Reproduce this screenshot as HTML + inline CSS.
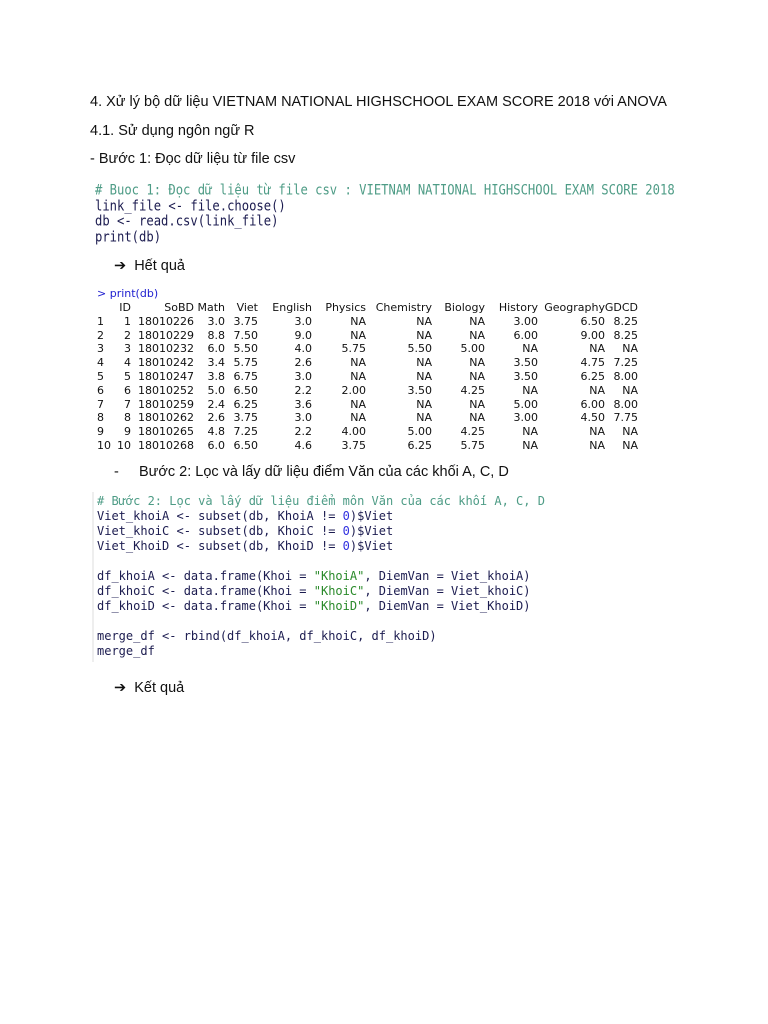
<!DOCTYPE html>
<html><head><meta charset="utf-8"><style>
body{margin:0;background:#fff;width:768px;height:1024px;position:relative;overflow:hidden}
.t{position:absolute;font-family:"Liberation Sans",sans-serif;font-size:14.5px;color:#111;white-space:nowrap;line-height:1}
.c{position:absolute;font-family:"DejaVu Sans Mono",monospace;white-space:pre;color:#1c1c50;line-height:1}
.c1{font-size:12.2px;transform:scaleY(1.15);transform-origin:0 0}
.c2{font-size:12px}
.cm{color:#4e9c86}
.s{color:#2a8a2a}
.n{color:#3030e0}
.tb{position:absolute;font-family:"DejaVu Sans",sans-serif;font-size:11px;color:#111;white-space:nowrap;line-height:1}
.r{text-align:right;transform:translateX(-100%)}
</style></head><body>
<div class="t" style="left:90px;top:95px">4. Xử lý bộ dữ liệu VIETNAM NATIONAL HIGHSCHOOL EXAM SCORE 2018 với ANOVA</div>
<div class="t" style="left:90px;top:124px">4.1. Sử dụng ngôn ngữ R</div>
<div class="t" style="left:90px;top:152px">- Bước 1: Đọc dữ liệu từ file csv</div>

<div class="c c1 cm" style="left:95px;top:183px"># Buoc 1: Đọc dữ liệu từ file csv : VIETNAM NATIONAL HIGHSCHOOL EXAM SCORE 2018</div>
<div class="c c1" style="left:95px;top:199px">link_file &lt;- file.choose()</div>
<div class="c c1" style="left:95px;top:214px">db &lt;- read.csv(link_file)</div>
<div class="c c1" style="left:95px;top:230px">print(db)</div>

<div class="t" style="left:114px;top:259px">➔&nbsp;&nbsp;Hết quả</div>

<div id="tbl"></div>

<div class="t" style="left:114px;top:465px">-&nbsp;&nbsp;&nbsp;&nbsp;&nbsp;Bước 2: Lọc và lấy dữ liệu điểm Văn của các khối A, C, D</div>

<div style="position:absolute;left:92px;top:492px;width:2px;height:170px;background:#eee"></div>
<div class="c c2 cm" style="left:97px;top:495px"># Bước 2: Lọc và lấy dữ liệu điểm môn Văn của các khối A, C, D</div>
<div class="c c2" style="left:97px;top:510px">Viet_khoiA &lt;- subset(db, KhoiA != <span class="n">0</span>)$Viet</div>
<div class="c c2" style="left:97px;top:525px">Viet_khoiC &lt;- subset(db, KhoiC != <span class="n">0</span>)$Viet</div>
<div class="c c2" style="left:97px;top:540px">Viet_KhoiD &lt;- subset(db, KhoiD != <span class="n">0</span>)$Viet</div>
<div class="c c2" style="left:97px;top:570px">df_khoiA &lt;- data.frame(Khoi = <span class="s">"KhoiA"</span>, DiemVan = Viet_khoiA)</div>
<div class="c c2" style="left:97px;top:585px">df_khoiC &lt;- data.frame(Khoi = <span class="s">"KhoiC"</span>, DiemVan = Viet_khoiC)</div>
<div class="c c2" style="left:97px;top:600px">df_khoiD &lt;- data.frame(Khoi = <span class="s">"KhoiD"</span>, DiemVan = Viet_KhoiD)</div>
<div class="c c2" style="left:97px;top:630px">merge_df &lt;- rbind(df_khoiA, df_khoiC, df_khoiD)</div>
<div class="c c2" style="left:97px;top:645px">merge_df</div>

<div class="t" style="left:114px;top:681px">➔&nbsp;&nbsp;Kết quả</div>

<script>
var rights=[131,194,225,258,312,366,432,485,538,605,638];
var hdr=["ID","SoBD","Math","Viet","English","Physics","Chemistry","Biology","History","Geography","GDCD"];
var rows=[
["1","18010226","3.0","3.75","3.0","NA","NA","NA","3.00","6.50","8.25"],
["2","18010229","8.8","7.50","9.0","NA","NA","NA","6.00","9.00","8.25"],
["3","18010232","6.0","5.50","4.0","5.75","5.50","5.00","NA","NA","NA"],
["4","18010242","3.4","5.75","2.6","NA","NA","NA","3.50","4.75","7.25"],
["5","18010247","3.8","6.75","3.0","NA","NA","NA","3.50","6.25","8.00"],
["6","18010252","5.0","6.50","2.2","2.00","3.50","4.25","NA","NA","NA"],
["7","18010259","2.4","6.25","3.6","NA","NA","NA","5.00","6.00","8.00"],
["8","18010262","2.6","3.75","3.0","NA","NA","NA","3.00","4.50","7.75"],
["9","18010265","4.8","7.25","2.2","4.00","5.00","4.25","NA","NA","NA"],
["10","18010268","6.0","6.50","4.6","3.75","6.25","5.75","NA","NA","NA"]];
var h='<div class="tb" style="left:97px;top:288px;color:#2020d0">&gt; print(db)</div>';
var y0=302,dy=13.8;
hdr.forEach(function(v,i){h+='<div class="tb r" style="left:'+rights[i]+'px;top:'+y0+'px">'+v+'</div>';});
rows.forEach(function(r,j){var y=(y0+dy*(j+1)).toFixed(1);
h+='<div class="tb" style="left:97px;top:'+y+'px">'+(j+1)+'</div>';
r.forEach(function(v,i){h+='<div class="tb r" style="left:'+rights[i]+'px;top:'+y+'px">'+v+'</div>';});});
document.getElementById('tbl').innerHTML=h;
</script>
</body></html>
